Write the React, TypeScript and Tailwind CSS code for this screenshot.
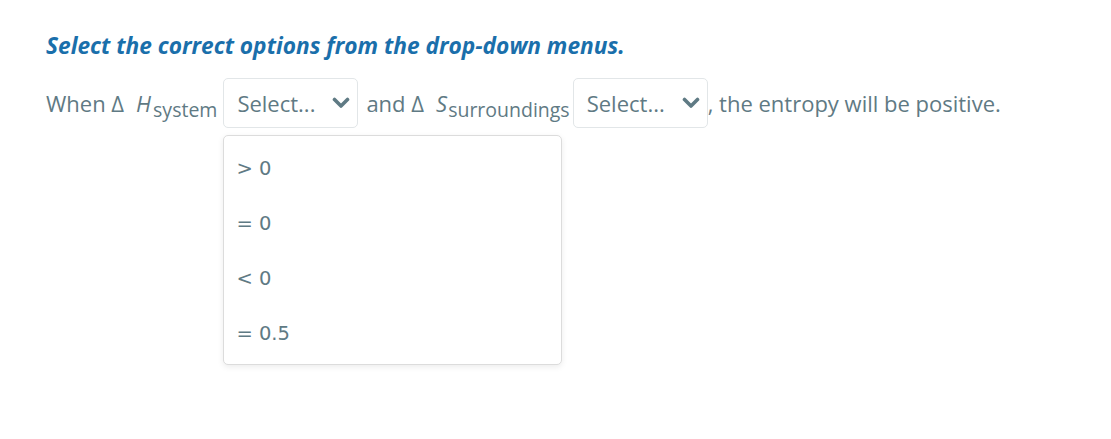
import React from "react";

function Chevron() {
  return (
    <svg width="18" height="12" viewBox="0 0 18 12" className="text-[#5f7a84]">
      <polyline points="2.5,2.5 9,9 15.5,2.5" fill="none" stroke="currentColor" strokeWidth="3.6" strokeLinecap="round" strokeLinejoin="round" />
    </svg>
  );
}

function SelectBox() {
  return (
    <span className="inline-flex h-[50px] w-[135px] items-center justify-between rounded-[5px] border border-[#e2e6e8] bg-white pl-[13px] pr-[7px] align-middle">
      <span>Select...</span>
      <Chevron />
    </span>
  );
}

export default function App() {
  return (
    <div className="min-h-[439px] w-[1111px] bg-white pl-[46px] pt-[30px] text-[#5f7a84]">
      <h1 className="font-['Open_Sans',sans-serif] text-[22.7px] font-bold italic leading-[32px] text-[#1a6fab]">
        Select the correct options from the drop-down menus.
      </h1>
      <div className="relative mt-[16px] flex items-center font-['Open_Sans',sans-serif] text-[22px]">
        <span>When Δ </span>
        <span className="ml-[12px] italic">H</span>
        <span className="relative top-[7px] ml-[2px] text-[19.5px]">system</span>
        <span className="ml-[6px] inline-flex relative">
          <SelectBox />
          <div className="absolute left-0 top-[57px] z-10 w-[339px] rounded-[5px] border border-[#dcdcdc] bg-white pb-[3px] pt-[5px] shadow-[0_2px_6px_rgba(0,0,0,0.08)] font-['DejaVu_Sans',sans-serif] text-[19.5px]">
            {["> 0", "= 0", "< 0", "= 0.5"].map((o) => (
              <div key={o} className="flex h-[55px] items-center pl-[12px]">
                {o}
              </div>
            ))}
          </div>
        </span>
        <span className="ml-[8px]">and Δ </span>
        <span className="ml-[12px] italic">S</span>
        <span className="relative top-[7px] ml-[1px] text-[19.5px]">surroundings</span>
        <span className="ml-[3px] inline-flex">
          <SelectBox />
        </span>
        <span>, the entropy will be positive.</span>
      </div>
    </div>
  );
}
